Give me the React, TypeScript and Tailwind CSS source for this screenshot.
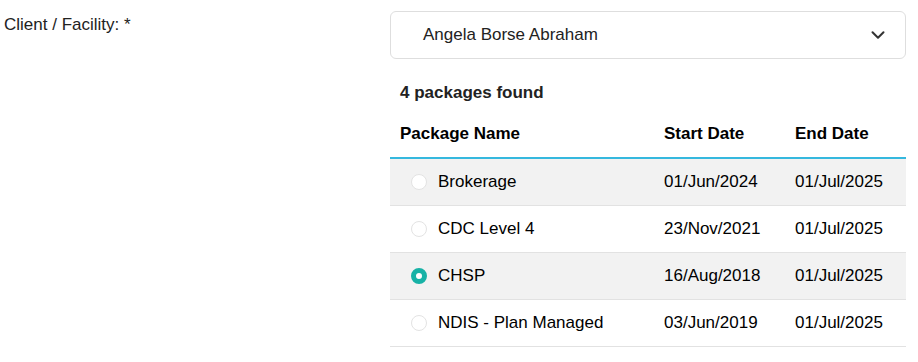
import { ChevronDown } from 'lucide-react'

interface PackageRow {
  name: string
  start: string
  end: string
  selected?: boolean
}

const packages: PackageRow[] = [
  { name: 'Brokerage', start: '01/Jun/2024', end: '01/Jul/2025' },
  { name: 'CDC Level 4', start: '23/Nov/2021', end: '01/Jul/2025' },
  { name: 'CHSP', start: '16/Aug/2018', end: '01/Jul/2025', selected: true },
  { name: 'NDIS - Plan Managed', start: '03/Jun/2019', end: '01/Jul/2025' },
]

function Radio({ checked }: { checked?: boolean }) {
  return checked ? (
    <span className="block h-4 w-4 rounded-full border-[5px] border-[#17b2a6] bg-white" />
  ) : (
    <span className="block h-4 w-4 rounded-full border border-[#e3e3e3] bg-white" />
  )
}

export default function App() {
  return (
    <div className="flex h-[362px] w-[918px] bg-white text-[17px] text-[#222] font-['Liberation_Sans',Arial,sans-serif]">
      <div className="w-[390px] shrink-0 pl-1 pt-[12px]">
        <label className="leading-[20px]">Client / Facility: *</label>
      </div>

      <div className="w-[516px] pt-[11px]">
        <button
          type="button"
          className="flex h-[48px] w-full items-center justify-between rounded-[6px] border border-[#dedede] bg-white pl-8 pr-4 text-left"
        >
          <span className="text-[17px]">Angela Borse Abraham</span>
          <ChevronDown className="h-[22px] w-[22px] text-[#333]" strokeWidth={2.2} />
        </button>

        <p className="mt-[24px] pl-[10px] font-bold leading-[20px]">4 packages found</p>

        <table className="mt-[11px] w-full border-collapse text-black">
          <thead>
            <tr className="border-b-2 border-[#35b8de]">
              <th className="h-[44px] pl-[10px] pt-[10px] text-left align-top font-bold leading-[20px]">Package Name</th>
              <th className="w-[131px] pt-[10px] text-left align-top font-bold leading-[20px]">Start Date</th>
              <th className="w-[111px] pt-[10px] text-left align-top font-bold leading-[20px]">End Date</th>
            </tr>
          </thead>
          <tbody>
            {packages.map((row, i) => (
              <tr
                key={row.name}
                className={`h-[47px] border-b border-[#e2e2e2] ${i % 2 === 0 ? 'bg-[#f2f2f2]' : 'bg-white'}`}
              >
                <td className="pl-[21px]">
                  <div className="flex items-center gap-[11px]">
                    <Radio checked={row.selected} />
                    <span>{row.name}</span>
                  </div>
                </td>
                <td>{row.start}</td>
                <td>{row.end}</td>
              </tr>
            ))}
          </tbody>
        </table>
      </div>
    </div>
  )
}
